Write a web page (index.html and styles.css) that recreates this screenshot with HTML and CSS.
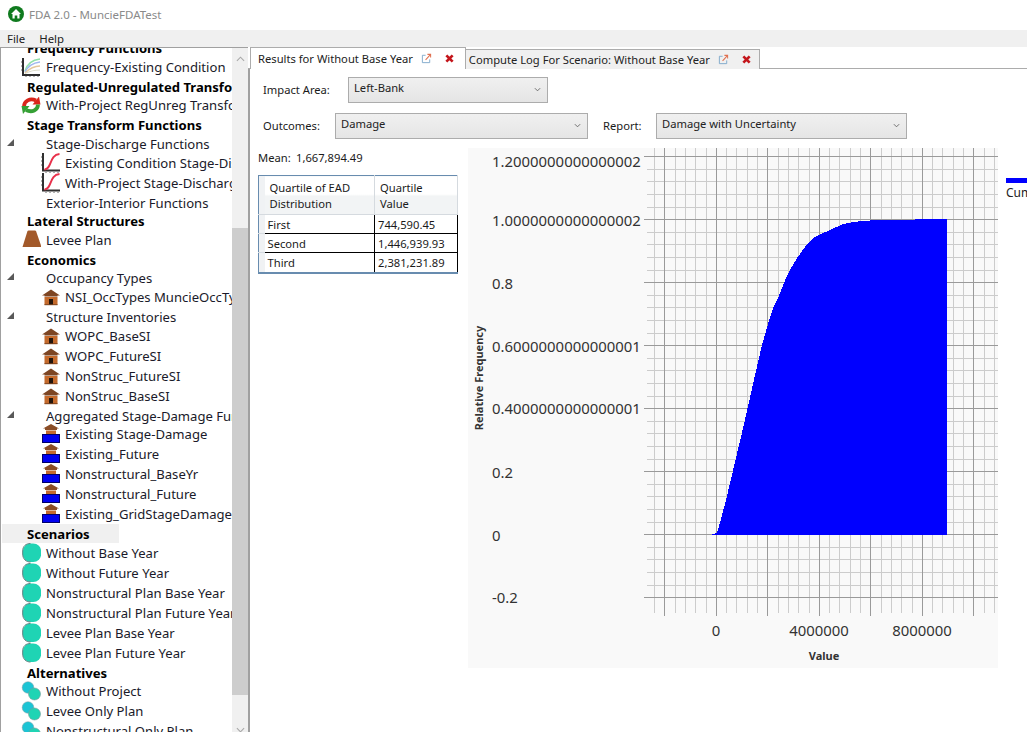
FILE: index.html
```html
<!DOCTYPE html>
<html lang="en">
<head>
<meta charset="utf-8">
<title>FDA 2.0 - MuncieFDATest</title>
<link rel="stylesheet" href="styles.css">
</head>
<body>
<svg class="defs" width="0" height="0" aria-hidden="true">
  <symbol id="i-curves" viewBox="0 0 20 20">
    <path d="M2 1v17h17" fill="none" stroke="#2e2e2e" stroke-width="2"/>
    <path d="M0 5h1M0 9h1M0 13h1M5 19v1M9 19v1M13 19v1M17 19v1" stroke="#666"/>
    <path d="M4 14C6 7 10 3 19 2" fill="none" stroke="#8fe0a8" stroke-width="1.500"/>
    <path d="M4 15C7 9 11 6 19 5" fill="none" stroke="#9fb8ee" stroke-width="1.500"/>
    <path d="M4 16C8 12 13 9 19 9" fill="none" stroke="#e4c79c" stroke-width="1.500"/>
    <path d="M4 16.500C9 14 14 13 19 13" fill="none" stroke="#dcdcc8" stroke-width="1.200"/>
  </symbol>
  <symbol id="i-regunreg" viewBox="0 0 20 20">
    <path d="M3 11.500C3 6 9 2.500 15 5.500" fill="none" stroke="#d9261c" stroke-width="3.800"/>
    <path d="M11.500 9.500 19.500 9.500 18 1.500z" fill="#d9261c"/>
    <path d="M17 9.500C17 15 11 18 5 15" fill="none" stroke="#35a035" stroke-width="3.800"/>
    <path d="M8.500 11 .5 11 2 19z" fill="#35a035"/>
  </symbol>
  <symbol id="i-rating" viewBox="0 0 20 20">
    <path d="M2 0v17.500h17" fill="none" stroke="#303030" stroke-width="2"/>
    <path d="M0 4h1M0 8h1M0 12h1M5 19v1M9 19v1M13 19v1M17 19v1" stroke="#666"/>
    <path d="M3.500 16.500C11 16.500 8 2 18.500 1" fill="none" stroke="#e8304a" stroke-width="1.900"/>
  </symbol>
  <symbol id="i-levee" viewBox="0 0 20 20">
    <path d="M1.500 17 6.500 1Q7 .5 7.500.5h6.500q.6 0 1 .5L20.500 17z" fill="#a2592a"/>
  </symbol>
  <symbol id="i-house" viewBox="0 0 20 20">
    <path d="M10 2.500 19 8.500h-2.500v1h-13v-1H1z" fill="#7d4522"/>
    <rect x="3.500" y="10" width="13" height="8" fill="#c46a2c"/>
    <rect x="8" y="12" width="4" height="6" fill="#24160c"/>
    <rect x="3.500" y="17.200" width="13" height="1" fill="#7d4522"/>
  </symbol>
  <symbol id="i-damage" viewBox="0 0 20 20">
    <path d="M10 0 18 4.500h-2V6H4V4.500H2z" fill="#8a4d26"/>
    <rect x="5" y="6.500" width="10" height="4" fill="#c46a2c"/>
    <rect x="1.500" y="10.500" width="17" height="8" fill="#0000f0" stroke="#00006a" stroke-width="1"/>
  </symbol>
  <symbol id="i-scenario" viewBox="0 0 20 20">
    <rect x="1.700" y=".5" width="18.500" height="18.500" rx="8" fill="#1fd4b4"/>
    <path d="M9.500 .5C5 .5 1.700 3 1.700 8v3c0 5 3.300 8 7.800 8" fill="none" stroke="#5e8080" stroke-width="1"/>
  </symbol>
  <symbol id="i-alt" viewBox="0 0 20 20">
    <circle cx="7" cy="6.500" r="5.800" fill="#1cc4d4" stroke="#7a9aa0" stroke-width=".5"/>
    <circle cx="13.500" cy="13" r="6" fill="#1fd4b4" stroke="#7a9a9a" stroke-width=".6"/>
  </symbol>
</svg>

<div class="window">
  <header class="titlebar">
    <svg class="app-icon" viewBox="0 0 16 16" width="16" height="16">
      <circle cx="8" cy="8" r="8" fill="#0f7a1e"/>
      <path d="M8 3 13 8h-1.500v4.500H9.300V9.500H6.700v3H4.500V8H3z" fill="#fff"/>
    </svg>
    <span class="app-title">FDA 2.0 - MuncieFDATest</span>
  </header>
  <nav class="menubar"><span>File</span><span>Help</span></nav>

  <div class="workspace">
    <aside class="sidebar">
      <div class="tree">
        <div class="tree-list">
          <div class="row head flush">Frequency Functions</div>
          <div class="row l1 up"><svg class="icon"><use href="#i-curves"/></svg>Frequency-Existing Condition</div>
          <div class="row head flush">Regulated-Unregulated Transform Functions</div>
          <div class="row l1 tight up"><svg class="icon"><use href="#i-regunreg"/></svg>With-Project RegUnreg Transform</div>
          <div class="row head">Stage Transform Functions</div>
          <div class="row l1 folder"><i class="exp"></i>Stage-Discharge Functions</div>
          <div class="row l2"><svg class="icon"><use href="#i-rating"/></svg>Existing Condition Stage-Discharge</div>
          <div class="row l2"><svg class="icon"><use href="#i-rating"/></svg>With-Project Stage-Discharge</div>
          <div class="row l1 folder">Exterior-Interior Functions</div>
          <div class="row head tight flush">Lateral Structures</div>
          <div class="row l1"><svg class="icon"><use href="#i-levee"/></svg>Levee Plan</div>
          <div class="row head tight">Economics</div>
          <div class="row l1 folder"><i class="exp"></i>Occupancy Types</div>
          <div class="row l2"><svg class="icon"><use href="#i-house"/></svg>NSI_OccTypes MuncieOccTypes</div>
          <div class="row l1 folder"><i class="exp"></i>Structure Inventories</div>
          <div class="row l2"><svg class="icon"><use href="#i-house"/></svg>WOPC_BaseSI</div>
          <div class="row l2"><svg class="icon"><use href="#i-house"/></svg>WOPC_FutureSI</div>
          <div class="row l2"><svg class="icon"><use href="#i-house"/></svg>NonStruc_FutureSI</div>
          <div class="row l2"><svg class="icon"><use href="#i-house"/></svg>NonStruc_BaseSI</div>
          <div class="row l1 folder tight"><i class="exp"></i>Aggregated Stage-Damage Functions</div>
          <div class="row l2"><svg class="icon"><use href="#i-damage"/></svg>Existing Stage-Damage</div>
          <div class="row l2"><svg class="icon"><use href="#i-damage"/></svg>Existing_Future</div>
          <div class="row l2"><svg class="icon"><use href="#i-damage"/></svg>Nonstructural_BaseYr</div>
          <div class="row l2"><svg class="icon"><use href="#i-damage"/></svg>Nonstructural_Future</div>
          <div class="row l2"><svg class="icon"><use href="#i-damage"/></svg>Existing_GridStageDamage</div>
          <div class="row head selected">Scenarios</div>
          <div class="row l1"><svg class="icon"><use href="#i-scenario"/></svg>Without Base Year</div>
          <div class="row l1"><svg class="icon"><use href="#i-scenario"/></svg>Without Future Year</div>
          <div class="row l1"><svg class="icon"><use href="#i-scenario"/></svg>Nonstructural Plan Base Year</div>
          <div class="row l1"><svg class="icon"><use href="#i-scenario"/></svg>Nonstructural Plan Future Year</div>
          <div class="row l1"><svg class="icon"><use href="#i-scenario"/></svg>Levee Plan Base Year</div>
          <div class="row l1"><svg class="icon"><use href="#i-scenario"/></svg>Levee Plan Future Year</div>
          <div class="row head tight">Alternatives</div>
          <div class="row l1"><svg class="icon"><use href="#i-alt"/></svg>Without Project</div>
          <div class="row l1"><svg class="icon"><use href="#i-alt"/></svg>Levee Only Plan</div>
          <div class="row l1"><svg class="icon"><use href="#i-alt"/></svg>Nonstructural Only Plan</div>
        </div>
      </div>
      <div class="scrollbar">
        <svg class="arrow-up" viewBox="0 0 10 6" width="9" height="6"><path d="M1 5 5 1l4 4" fill="none" stroke="#a8a8a8" stroke-width="1.200"/></svg>
        <div class="thumb"></div>
        <svg class="arrow-down" viewBox="0 0 10 6" width="9" height="6"><path d="M1 1l4 4 4-4" fill="none" stroke="#a8a8a8" stroke-width="1.200"/></svg>
      </div>
    </aside>

    <main class="content">
      <div class="tabstrip">
        <div class="tab active">
          <span>Results for Without Base Year</span>
          <svg class="pop" viewBox="0 0 12 12" width="11" height="11"><path d="M5 2.500H1.500v8h8V7" fill="none" stroke="#7da7c9"/><path d="M5 7.500 10.500 1.500M7 1.500h3.500V5" fill="none" stroke="#e07050" stroke-width="1.100"/></svg>
          <svg class="close" viewBox="0 0 10 10" width="9" height="9"><path d="M1.500 1.500l7 7M8.500 1.500l-7 7" stroke="#c4161c" stroke-width="3"/></svg>
        </div>
        <div class="tab">
          <span>Compute Log For Scenario: Without Base Year</span>
          <svg class="pop" viewBox="0 0 12 12" width="11" height="11"><path d="M5 2.500H1.500v8h8V7" fill="none" stroke="#7da7c9"/><path d="M5 7.500 10.500 1.500M7 1.500h3.500V5" fill="none" stroke="#e07050" stroke-width="1.100"/></svg>
          <svg class="close" viewBox="0 0 10 10" width="9" height="9"><path d="M1.500 1.500l7 7M8.500 1.500l-7 7" stroke="#c4161c" stroke-width="3"/></svg>
        </div>
      </div>

      <section class="panel">
        <div class="filter-row first">
          <label class="lbl lbl-impact">Impact Area:</label>
          <div class="combo combo-impact"><span>Left-Bank</span><svg class="chev" viewBox="0 0 8 5" width="7" height="5"><path d="M1 1l3 3 3-3" fill="none" stroke="#606060"/></svg></div>
        </div>
        <div class="filter-row">
          <label class="lbl lbl-outcomes">Outcomes:</label>
          <div class="combo combo-outcomes"><span>Damage</span><svg class="chev" viewBox="0 0 8 5" width="7" height="5"><path d="M1 1l3 3 3-3" fill="none" stroke="#606060"/></svg></div>
          <label class="lbl lbl-report">Report:</label>
          <div class="combo combo-report"><span>Damage with Uncertainty</span><svg class="chev" viewBox="0 0 8 5" width="7" height="5"><path d="M1 1l3 3 3-3" fill="none" stroke="#606060"/></svg></div>
        </div>

        <div class="results">
          <div class="summary">
            <div class="mean"><span class="mean-label">Mean:</span><span>1,667,894.49</span></div>
            <table class="grid">
              <thead>
                <tr><th class="rh"></th><th class="c1">Quartile of EAD Distribution</th><th class="c2">Quartile Value</th></tr>
              </thead>
              <tbody>
                <tr><td class="rh"></td><td>First</td><td>744,590.45</td></tr>
                <tr><td class="rh"></td><td>Second</td><td>1,446,939.93</td></tr>
                <tr class="last"><td class="rh"></td><td>Third</td><td>2,381,231.89</td></tr>
              </tbody>
            </table>
          </div>

          <svg class="chart" viewBox="468 148 530 520" width="530" height="520" shape-rendering="crispEdges">
            <rect x="468" y="148" width="530" height="520" fill="#f9f9f9"/>
            <path class="minor" d="M654 148V613M675 148V613M685 148V613M695 148V613M706 148V613M726 148V613M736 148V613M747 148V613M757 148V613M778 148V613M788 148V613M798 148V613M809 148V613M829 148V613M839 148V613M850 148V613M860 148V613M881 148V613M891 148V613M901 148V613M912 148V613M932 148V613M942 148V613M953 148V613M963 148V613M984 148V613M994 148V613"/>
            <path class="minor" d="M647 169H998M647 181H998M647 194H998M647 207H998M647 232H998M647 244H998M647 257H998M647 270H998M647 295H998M647 307H998M647 320H998M647 333H998M647 358H998M647 370H998M647 383H998M647 396H998M647 421H998M647 433H998M647 446H998M647 459H998M647 484H998M647 496H998M647 509H998M647 522H998M647 547H998M647 559H998M647 572H998M647 585H998"/>
            <path class="major" d="M664.500 148V616M716.500 148V616M767.500 148V616M819.500 148V616M870.500 148V616M922.500 148V616M973.500 148V616"/>
            <path class="major" d="M644 156.500H998M644 219.500H998M644 282.500H998M644 345.500H998M644 408.500H998M644 471.500H998M644 534.500H998M644 597.500H998"/>
            <path fill="#0000ff" d="M712 535V534L717 533 721 519 726 500 735 462 744 424 753 384 762 345 768 324 773 308 778 298 782 288 786 278 790 270 797 258 805 247 813 238 821 234 830 230 843 224 853 222 863 221 877 220 915 219.500 947 219V535Z"/>
            <g class="ticks" shape-rendering="auto">
              <text x="492" y="167">1.2000000000000002</text>
              <text x="492" y="226">1.0000000000000002</text>
              <text x="492" y="289">0.8</text>
              <text x="492" y="352">0.6000000000000001</text>
              <text x="492" y="414">0.4000000000000001</text>
              <text x="492" y="478">0.2</text>
              <text x="492" y="541">0</text>
              <text x="492" y="603">-0.2</text>
              <text x="716" y="636" text-anchor="middle">0</text>
              <text x="819" y="636" text-anchor="middle">4000000</text>
              <text x="922" y="636" text-anchor="middle">8000000</text>
            </g>
            <g class="axis-title" shape-rendering="auto">
              <text x="824" y="660" text-anchor="middle">Value</text>
              <text transform="translate(483 378) rotate(-90)" text-anchor="middle">Relative Frequency</text>
            </g>
          </svg>

          <div class="legend">
            <div class="swatch"></div>
            <div class="legend-label">Cumulative</div>
          </div>
        </div>
      </section>
    </main>
  </div>
</div>
</body>
</html>
```
FILE: styles.css
```css
* { box-sizing: border-box; }
html, body { margin: 0; padding: 0; height: 100%; overflow: hidden; background: #fff; }
body { font-family: "Noto Sans", "Open Sans", sans-serif; font-size: 11.2px; color: #1a1a1a; }
.defs { position: absolute; }

.window { width: 1027px; height: 732px; display: flex; flex-direction: column; overflow: hidden; }

.titlebar { height: 30px; flex: none; display: flex; align-items: center; padding: 0 0 2px 8px; gap: 5px; background: #fff; }
.app-icon { flex: none; }
.app-title { color: #8a8a8a; font-size: 11.5px; }

.menubar { height: 17px; flex: none; background: #f0f0f0; display: flex; align-items: center; padding-left: 7px; gap: 14px; font-size: 11.4px; color: #222; }

.workspace { flex: 1; min-height: 0; display: flex; }

.sidebar { width: 248px; flex: none; display: flex; border: 1px solid #a0a0a0; border-width: 1px 0 0 1px; overflow: hidden; }
.tree { width: 231px; flex: none; overflow: hidden; font-size: 13.1px; }
.tree-list { margin-top: -9px; }

.row { height: 20px; display: flex; align-items: center; white-space: nowrap; overflow: hidden; color: #1a1a2a; position: relative; }
.row.up { padding-bottom: 2px; }
.row.tight { height: 18px; }
.row.folder { height: 19px; padding-top: 1px; }
.row.folder.tight { height: 18px; }
.row.head { height: 19px; padding-left: 26px; padding-top: 1px; font-weight: 700; color: #000; }
.row.head.tight { height: 18px; }
.row.head.flush { padding-top: 0; padding-bottom: 1px; }
.row.selected { width: 117px; margin-left: 1px; padding-left: 25px; background: #f0f0f0; }
.row.l1 { padding-left: 20px; }
.row.l1.folder { padding-left: 45px; }
.row.l2 { padding-left: 40px; }
.icon { width: 20px; height: 20px; flex: none; margin-right: 5px; }
.row.l2 .icon { margin-right: 4px; }
.exp { position: absolute; left: 6px; top: 5px; width: 0; height: 0; border-style: solid; border-width: 0 0 7px 7px; border-color: transparent transparent #595959 transparent; }

.scrollbar { width: 17px; flex: none; background: #f0f0f0; position: relative; display: flex; flex-direction: column; align-items: center; }
.arrow-up { position: absolute; top: 8px; left: 4px; }
.arrow-down { position: absolute; bottom: -1px; left: 4px; }
.thumb { width: 17px; height: 467px; margin-top: 180px; background: #cdcdcd; }

.content { flex: 1; min-width: 0; display: flex; flex-direction: column; }

.tabstrip { height: 22px; flex: none; display: flex; align-items: flex-end; padding-left: 2px; border-bottom: 1px solid #acacac; }
.tab { height: 20px; display: flex; align-items: center; padding: 0 8px 0 3px; background: #f0f0f0; border: 1px solid #acacac; border-bottom: 0; border-left: 0; color: #222; margin-bottom: -1px; }
.tab.active { height: 22px; background: #fff; border-left: 1px solid #acacac; padding: 0 11px 0 7px; position: relative; z-index: 1; }
.pop { margin-left: 8px; }
.close { margin-left: 13px; }

.panel { flex: 1; min-height: 0; border-left: 2px solid #a0a0a0; position: relative; overflow: hidden; }

.filter-row { display: flex; align-items: center; height: 26px; margin-top: 10px; }
.filter-row.first { margin-top: 8px; }
.lbl { padding-bottom: 1px; }
.lbl-impact { margin-left: 13px; width: 85px; }
.lbl-outcomes { margin-left: 13px; width: 72px; }
.lbl-report { margin-left: 15px; width: 53px; }
.combo { height: 26px; display: flex; align-items: center; justify-content: space-between; padding: 0 6px 5px 5px; border: 1px solid #acacac; background: linear-gradient(#f0f0f0, #e5e5e5); color: #222; }
.combo-impact { width: 200px; }
.combo-outcomes { width: 253px; }
.combo-report { width: 251px; }
.chev { margin-top: 3px; }

.results { display: flex; margin-top: 9px; }
.summary { width: 218px; flex: none; padding-left: 8px; }
.mean { height: 17px; margin-top: 1px; display: flex; align-items: center; }
.mean-label { width: 38px; }

.grid { margin-top: 9px; border-collapse: collapse; width: 200px; table-layout: fixed; border: 1px solid #688caf; border-bottom-width: 2px; }
.grid th { height: 39px; font-weight: 400; text-align: left; vertical-align: middle; line-height: 16px; padding: 2px 4px 0 5px; background: linear-gradient(#fff 0, #fff 48%, #f2f4f5 50%, #f2f4f5 100%); border-bottom: 1px solid #d5dadf; border-right: 1px solid #d5dadf; }
.grid th.c1 { width: 110px; }
.grid th.c2 { width: 83px; }
.grid th.rh, .grid td.rh { width: 6px; padding: 0; background: #f0f2f4; border: 0; border-bottom: 1px solid #d5dadf; }
.grid td { height: 19px; padding: 0 2px 0 3px; border: 1px solid #000; border-left: 0; border-top: 0; }
.grid tr.last td { height: 20px; }

.chart { flex: none; }
.chart .minor { fill: none; stroke: #cccccc; stroke-width: 1; }
.chart .major { fill: none; stroke: #9a9a9a; stroke-width: 1; }
.ticks text { font-family: "Noto Sans", sans-serif; font-size: 14.9px; fill: #333; }
.axis-title text { font-family: "Noto Sans", sans-serif; font-size: 11px; font-weight: 700; fill: #333; }

.legend { width: 29px; margin-left: 8px; overflow: hidden; flex: none; padding-top: 30px; }
.swatch { width: 30px; height: 5px; background: #0000ff; }
.legend-label { font-size: 12px; white-space: nowrap; margin-top: 1px; color: #222; }
```
